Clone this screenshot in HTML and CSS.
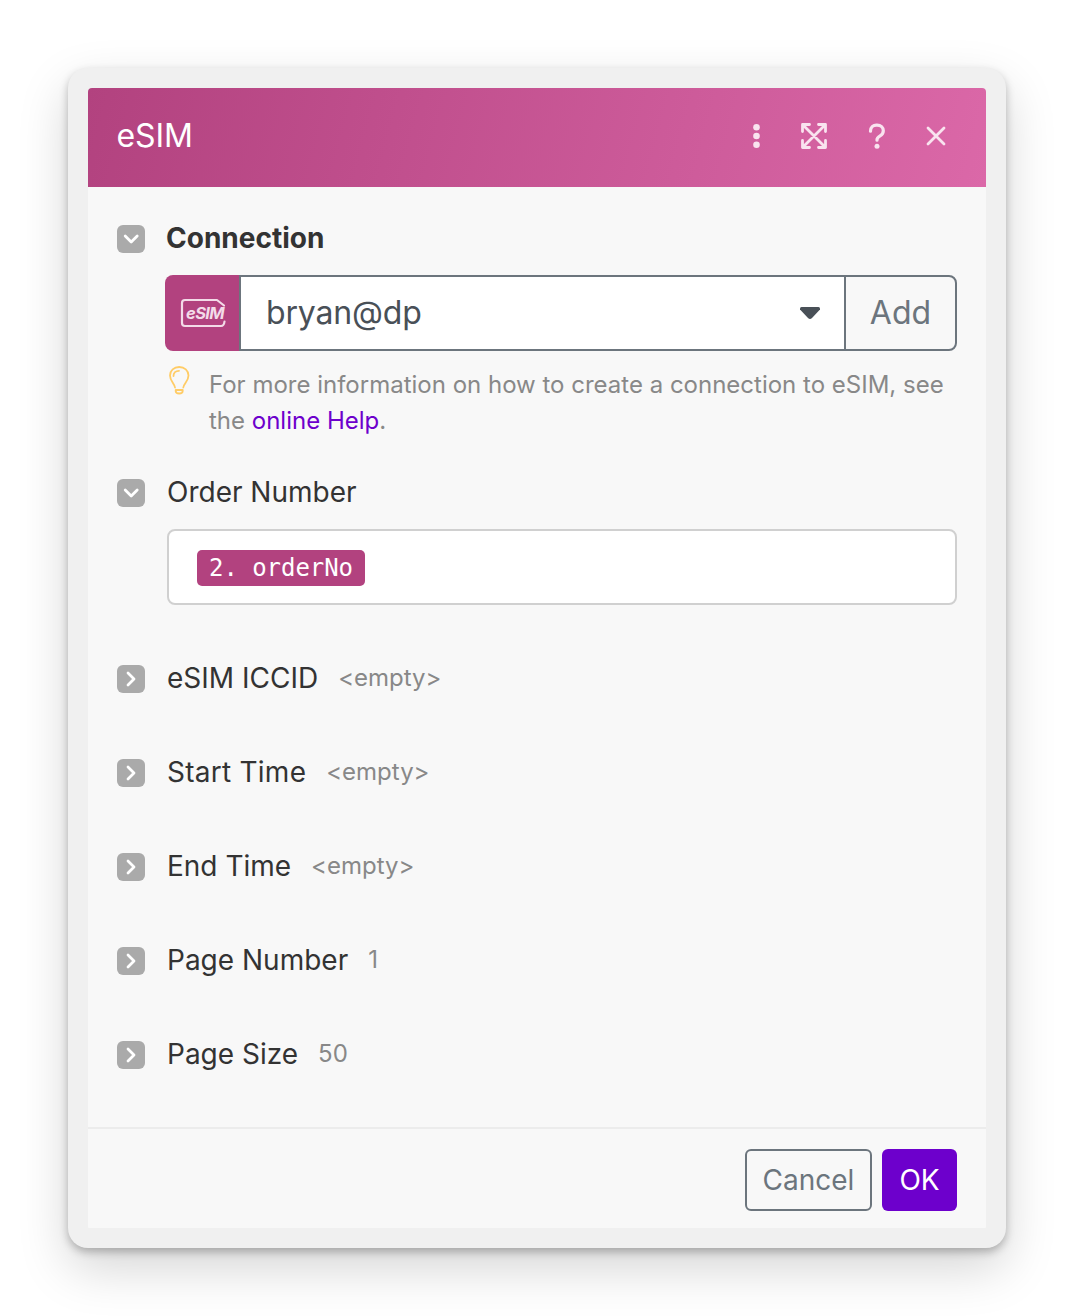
FILE: index.html
```html
<!DOCTYPE html>
<html lang="en">
<head>
<meta charset="utf-8">
<title>eSIM</title>
<link rel="stylesheet" href="styles.css">
</head>
<body>
<svg class="defs" width="0" height="0" aria-hidden="true">
  <symbol id="down" viewBox="0 0 28 28"><path d="M8.200 11l6 6 6-6"/></symbol>
  <symbol id="right" viewBox="0 0 28 28"><path d="M11 8l6 6-6 6"/></symbol>
</svg>
<main class="frame">
  <section class="dialog">
    <header class="header">
      <h1 class="title">eSIM</h1>
      <div class="tools">
        <svg class="tool" viewBox="0 0 28 28"><g fill="currentColor" stroke="none"><circle cx="14.500" cy="5.200" r="3.300"/><circle cx="14.500" cy="14" r="3.300"/><circle cx="14.500" cy="22.800" r="3.300"/></g></svg>
        <svg class="tool expand" viewBox="0 0 28 28"><path d="M3 3l22 22M25 3L3 25M2.500 9.500V2.500h7M18.500 2.500h7v7M25.500 18.500v7h-7M9.500 25.500h-7v-7"/></svg>
        <svg class="tool help" viewBox="0 0 28 28"><path d="M7.500 9.200V9c0-3.600 2.600-5.900 6-5.900h.6c3.600 0 6.200 2.300 6.200 5.700 0 2.500-1.200 3.900-3.200 5-2 1.100-3.100 2-3.100 4v.4"/><circle cx="14" cy="24.300" r="2.500" fill="currentColor" stroke="none"/></svg>
        <svg class="tool close" viewBox="0 0 28 28"><path d="M6 6l16 16M22 6L6 22"/></svg>
      </div>
    </header>
    <div class="body">
      <div class="field">
        <div class="row"><svg class="toggle"><use href="#down"/></svg><span class="label strong">Connection</span></div>
        <div class="connection">
          <div class="app">
            <svg viewBox="0 0 46 30" width="46" height="30"><path d="M44 7.500L37 2H5Q2 2 2 5V25Q2 28 5 28H41Q44 28 44.500 23.500"/><text x="6" y="21">eSIM</text></svg>
          </div>
          <div class="select"><span>bryan@dp</span><svg width="20" height="12" viewBox="0 0 20 12"><path d="M1.500 0h17q1.500 0 1.500 1.500v1L12 11q-2 2-4 0L0 2.500v-1Q0 0 1.500 0z"/></svg></div>
          <button class="add">Add</button>
        </div>
        <div class="hint">
          <svg class="bulb" width="22" height="30" viewBox="0 0 22 30"><path d="M7 22.500C6.500 18.500 2 16 2 10.500 2 5.500 6 2 11.200 2s9.300 3.500 9.300 8.500c0 5.500-4.700 8-5.200 12M5.500 11c0-3.200 2.100-5.200 5.500-5.200M7.700 25h7v1q0 2.500-3.500 2.500T7.700 26z"/></svg>
          <p>For more information on how to create a connection to eSIM, see the <a>online Help</a>.</p>
        </div>
      </div>
      <div class="field">
        <div class="row"><svg class="toggle"><use href="#down"/></svg><span class="label">Order Number</span></div>
        <div class="input"><span class="pill">2. orderNo</span></div>
      </div>
      <div class="collapsed">
        <div class="row"><svg class="toggle"><use href="#right"/></svg><span class="label">eSIM ICCID</span><span class="value">&lt;empty&gt;</span></div>
        <div class="row"><svg class="toggle"><use href="#right"/></svg><span class="label loose">Start Time</span><span class="value">&lt;empty&gt;</span></div>
        <div class="row"><svg class="toggle"><use href="#right"/></svg><span class="label">End Time</span><span class="value">&lt;empty&gt;</span></div>
        <div class="row"><svg class="toggle"><use href="#right"/></svg><span class="label">Page Number</span><span class="value">1</span></div>
        <div class="row"><svg class="toggle"><use href="#right"/></svg><span class="label">Page Size</span><span class="value">50</span></div>
      </div>
    </div>
    <footer class="footer"><button class="cancel">Cancel</button><button class="ok">OK</button></footer>
  </section>
</main>
</body>
</html>
```
FILE: styles.css
```css
* { box-sizing: border-box; }
body { margin: 0; padding: 68px; height: 1316px; background: #fff; font-family: Inter, "Liberation Sans", sans-serif; font-weight: 380; }
button { font: inherit; padding: 0; margin: 0; background: none; }
.defs { position: absolute; }
.frame { width: 938px; height: 1180px; padding: 20px; border-radius: 20px; background: #f0f0f0; box-shadow: 0 20px 50px rgba(0,0,0,.17), 0 4px 8px rgba(0,0,0,.25); }
.dialog { height: 1140px; display: flex; flex-direction: column; background: #f8f8f8; border-radius: 4px 4px 1px 1px; overflow: hidden; }
.header { height: 99px; flex: none; display: flex; align-items: center; justify-content: space-between; padding: 0 36px 4px 29px; color: #fff; background: linear-gradient(105deg, #b2427f, #db68a8); }
.title { margin: 1px 0 0 -.5px; font-size: 32px; font-weight: 380; line-height: 40px; letter-spacing: -.1px; }
.tools { display: flex; align-items: center; color: #f9e3ef; }
.tool { width: 28px; height: 28px; fill: none; stroke: currentColor; stroke-width: 2.800; stroke-linecap: round; stroke-linejoin: round; }
.expand { margin-left: 30px; }
.help { margin-left: 35px; stroke-width: 3.200; }
.close { margin-left: 31px; }
.body { flex: 1; padding: 38px 29px 0; }
.field { margin-bottom: 40px; }
.field + .field { margin-bottom: 60px; }
.row { height: 28px; display: flex; align-items: center; }
.toggle { width: 28px; height: 28px; flex: none; margin-right: 22px; border-radius: 6px; background: #aaa; fill: none; stroke: #fff; stroke-width: 2.800; stroke-linecap: round; stroke-linejoin: round; }
.label { font-size: 28px; line-height: 28px; color: #333; margin-top: -2px; }
.strong { font-weight: 700; margin-left: -1px; }
.loose { letter-spacing: .25px; }
.value { margin-left: 20px; margin-top: -3px; font-size: 24px; line-height: 28px; color: #888; }
.connection { display: flex; height: 76px; margin: 22px 0 0 48px; font-size: 32px; }
.app { width: 74px; display: flex; align-items: center; justify-content: center; padding-left: 2px; background: #b2427f; border-radius: 8px 0 0 8px; }
.app path { fill: none; stroke: #f3dbe8; stroke-width: 2.200; stroke-linejoin: round; stroke-linecap: round; }
.app text { font: italic 700 16.500px Inter, sans-serif; letter-spacing: -.6px; fill: #f3dbe8; }
.select { flex: 1; display: flex; align-items: center; justify-content: space-between; padding: 0 24px 0 25px; border: 2px solid #6c757d; border-right: 0; background: #fff; color: #495057; }
.select span { margin-top: -1px; letter-spacing: -.15px; }
.select svg { fill: #495057; }
.add { width: 113px; padding-bottom: 1px; border: 2px solid #6c757d; border-radius: 0 8px 8px 0; color: #6c757d; }
.hint { display: flex; margin: 16px -10px 0 51px; font-size: 24px; line-height: 36px; color: #888; }
.hint p { margin: 0 0 0 19px; }
.hint a { color: #6d00cc; }
.bulb { flex: none; margin-top: -2px; fill: none; stroke: #fc6; stroke-width: 1.800; stroke-linecap: round; stroke-linejoin: round; }
.input { height: 76px; margin: 22px 0 0 50px; padding: 2px 28px 0; display: flex; align-items: center; border: 2px solid #d0d0d0; border-radius: 8px; background: #fff; }
.pill { height: 36px; width: 168px; padding: 0 12px; border-radius: 5px; background: #b2427f; color: #fff; font: 24px/36px "DejaVu Sans Mono", monospace; letter-spacing: -.05px; white-space: nowrap; }
.collapsed { display: flex; flex-direction: column; gap: 66px; }
.footer { height: 101px; flex: none; display: flex; justify-content: flex-end; gap: 10px; padding: 20px 29px; border-top: 2px solid #ececec; font-size: 28px; }
.footer button { height: 62px; border-radius: 6px; }
.footer .cancel { width: 127px; border: 2px solid #6c757d; color: #6c757d; }
.footer .ok { width: 75px; border: 0; background: #6d00cc; color: #fff; }
```
